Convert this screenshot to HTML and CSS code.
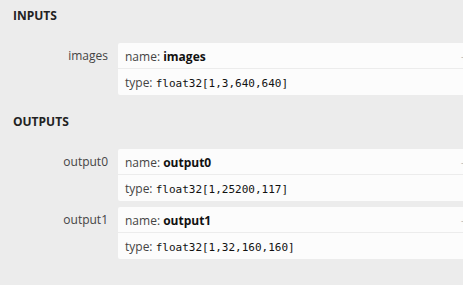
FILE: index.html
```html
<!DOCTYPE html>
<html lang="en">
<head>
<meta charset="UTF-8" />
<title>Model Properties</title>
<link rel="stylesheet" href="styles.css">
</head>
<body>
  <div class="sidebar">
    <div class="section-header">INPUTS</div>
    <div class="section">
      <div class="item">
        <div class="item-name">images</div>
        <div class="item-value">
          <div class="value-line name-line"><span>name: <b>images</b></span><span class="expander">+</span></div>
          <div class="value-line border">type: <code>float32[1,3,640,640]</code></div>
        </div>
      </div>
    </div>

    <div class="section-header">OUTPUTS</div>
    <div class="section">
      <div class="item">
        <div class="item-name">output0</div>
        <div class="item-value">
          <div class="value-line name-line"><span>name: <b>output0</b></span><span class="expander">+</span></div>
          <div class="value-line border">type: <code>float32[1,25200,117]</code></div>
        </div>
      </div>
      <div class="item">
        <div class="item-name">output1</div>
        <div class="item-value">
          <div class="value-line name-line"><span>name: <b>output1</b></span><span class="expander">+</span></div>
          <div class="value-line border">type: <code>float32[1,32,160,160]</code></div>
        </div>
      </div>
    </div>
  </div>
</body>
</html>
```

FILE: styles.css
```css
html, body {
  margin: 0;
  padding: 0;
  overflow: hidden;
  background: #ececec;
}

body {
  font-family: "Open Sans", "Noto Sans", sans-serif;
  font-size: 12px;
  color: #444;
}

.sidebar {
  width: 476px;
  padding-top: 8px;
}

.section-header {
  font-weight: bold;
  font-size: 12px;
  line-height: 16px;
  color: #222;
  padding-left: 13px;
  margin-bottom: 19px;
}

.section {
  display: flex;
  flex-direction: column;
  gap: 6px;
  margin-bottom: 19px;
}

.item {
  display: flex;
}

.item-name {
  width: 118px;
  flex-shrink: 0;
  box-sizing: border-box;
  padding: 5px 10px 0 0;
  text-align: right;
  line-height: 16px;
  color: #444;
}

.item-value {
  flex: 1;
  background: #fcfcfc;
  border-radius: 2px;
}

.value-line {
  padding: 6px 7px 3px 7px;
  line-height: 16px;
}

.name-line {
  display: flex;
  justify-content: space-between;
}

.value-line.border {
  border-top: 1px solid #ececec;
}

.value-line b {
  font-weight: bold;
  color: #111;
}

.value-line code {
  font-family: "DejaVu Sans Mono", "Liberation Mono", monospace;
  font-size: 11px;
  color: #111;
}

.expander {
  color: #999;
  font-size: 11px;
  margin-right: 2px;
}
```
